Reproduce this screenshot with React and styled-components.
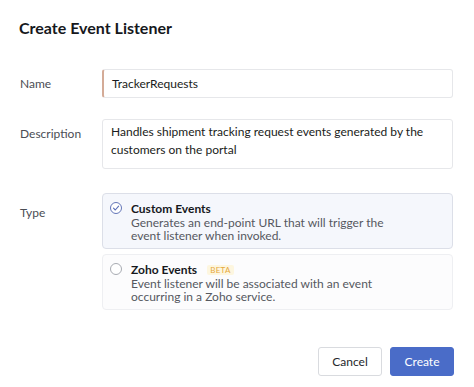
import React, { useState } from "react";
import styled, { createGlobalStyle } from "styled-components";

const GlobalStyle = createGlobalStyle`
  html, body {
    margin: 0;
    padding: 0;
    background: #ffffff;
  }
  body {
    font-family: Lato, "Open Sans", sans-serif;
    color: #1f2126;
  }
`;

const eventTypes = [
  {
    id: "custom",
    title: "Custom Events",
    text: "Generates an end-point URL that will trigger the event listener when invoked.",
  },
  {
    id: "zoho",
    title: "Zoho Events",
    beta: true,
    text: "Event listener will be associated with an event occurring in a Zoho service.",
  },
];

const App = () => {
  const [type, setType] = useState("custom");

  return (
    <>
      <GlobalStyle />
      <Dialog>
        <Title>Create Event Listener</Title>
        <Form>
          <Row>
            <Label>Name</Label>
            <Input>TrackerRequests</Input>
          </Row>
          <Row>
            <Label>Description</Label>
            <TextArea>
              Handles shipment tracking request events generated by the
              customers on the portal
            </TextArea>
          </Row>
          <Row $top={24}>
            <Label $offset={12}>Type</Label>
            <Options>
              {eventTypes.map((item) => (
                <Option
                  key={item.id}
                  $active={type === item.id}
                  onClick={() => setType(item.id)}>
                  <Radio $active={type === item.id}>
                    {type === item.id && (
                      <svg width="8" height="8" viewBox="0 0 8 8">
                        <path
                          d="M1.5 4.2 L3.3 6 L6.6 2.2"
                          fill="none"
                          stroke="#5a6fb8"
                          strokeWidth="1.1"
                          strokeLinecap="round"
                          strokeLinejoin="round"
                        />
                      </svg>
                    )}
                  </Radio>
                  <OptionBody>
                    <OptionTitle>
                      {item.title}
                      {item.beta && <Badge>BETA</Badge>}
                    </OptionTitle>
                    <OptionText>{item.text}</OptionText>
                  </OptionBody>
                </Option>
              ))}
            </Options>
          </Row>
        </Form>
        <Footer>
          <Button>Cancel</Button>
          <Button $primary>Create</Button>
        </Footer>
      </Dialog>
    </>
  );
};

const Dialog = styled.div`
  width: 474px;
  height: 387px;
  box-sizing: border-box;
  padding: 17px 20px 0 19px;
  display: flex;
  flex-direction: column;
`;

const Title = styled.h1`
  margin: 0;
  font-size: 16px;
  line-height: 22px;
  font-weight: 700;
  color: #16181c;
`;

const Form = styled.div`
  margin-top: 30px;
  display: flex;
  flex-direction: column;
  gap: 21px;
`;

const Row = styled.div`
  display: flex;
  align-items: flex-start;
  margin-top: ${(p) => (p.$top ? p.$top - 21 : 0)}px;
`;

const Label = styled.div`
  width: 82px;
  flex-shrink: 0;
  padding-left: 1px;
  padding-top: ${(p) => p.$offset || 7}px;
  font-size: 12px;
  line-height: 16px;
  color: #4a4d54;
`;

const Input = styled.div`
  flex: 1;
  height: 29px;
  margin-right: 1px;
  box-sizing: border-box;
  border: 1px solid #e6e7ea;
  border-left: 2px solid #d4ab97;
  border-radius: 3px;
  padding: 0 8px;
  display: flex;
  align-items: center;
  font-size: 12px;
  color: #1a1c20;
`;

const TextArea = styled.div`
  flex: 1;
  height: 50px;
  margin-right: 1px;
  box-sizing: border-box;
  border: 1px solid #e6e7ea;
  border-radius: 3px;
  padding: 3px 8px;
  font-size: 12px;
  line-height: 17.5px;
  color: #1a1c20;
`;

const Options = styled.div`
  flex: 1;
  margin-right: 1px;
  display: flex;
  flex-direction: column;
  gap: 5px;
`;

const Option = styled.div`
  display: flex;
  align-items: flex-start;
  gap: 9px;
  height: 56px;
  box-sizing: border-box;
  padding: 7px 8px 0 7px;
  border: 1px solid ${(p) => (p.$active ? "#dcdfe8" : "#eeeff2")};
  border-radius: 4px;
  background: ${(p) => (p.$active ? "#f5f7fc" : "#fcfcfd")};
  cursor: pointer;
`;

const Radio = styled.span`
  width: 12px;
  height: 12px;
  margin-top: 1px;
  flex-shrink: 0;
  box-sizing: border-box;
  border-radius: 50%;
  border: 1px solid ${(p) => (p.$active ? "#6476b8" : "#a8abb2")};
  background: #ffffff;
  display: flex;
  align-items: center;
  justify-content: center;
`;

const OptionBody = styled.div`
  display: flex;
  flex-direction: column;
`;

const OptionTitle = styled.div`
  display: flex;
  align-items: center;
  gap: 10px;
  font-size: 12px;
  line-height: 15px;
  font-weight: 700;
  color: #16181c;
`;

const Badge = styled.span`
  font-size: 8px;
  line-height: 10px;
  padding: 0 3px;
  font-weight: 400;
  letter-spacing: 0.3px;
  color: #e6a83c;
  background: #fdf6df;
  border-radius: 2px;
`;

const OptionText = styled.div`
  margin-top: 1px;
  width: 260px;
  font-size: 12px;
  line-height: 12.5px;
  color: #55585f;
`;

const Footer = styled.div`
  margin-top: auto;
  margin-bottom: 11px;
  display: flex;
  justify-content: flex-end;
  gap: 8px;
`;

const Button = styled.button`
  height: 29px;
  width: 64px;
  box-sizing: border-box;
  border-radius: 3px;
  font-family: Lato, "Open Sans", sans-serif;
  font-size: 12px;
  cursor: pointer;
  border: 1px solid ${(p) => (p.$primary ? "#4a6cc8" : "#d9dbdf")};
  background: ${(p) => (p.$primary ? "#4a6cc8" : "#ffffff")};
  color: ${(p) => (p.$primary ? "#ffffff" : "#25272b")};
`;

export default App;
